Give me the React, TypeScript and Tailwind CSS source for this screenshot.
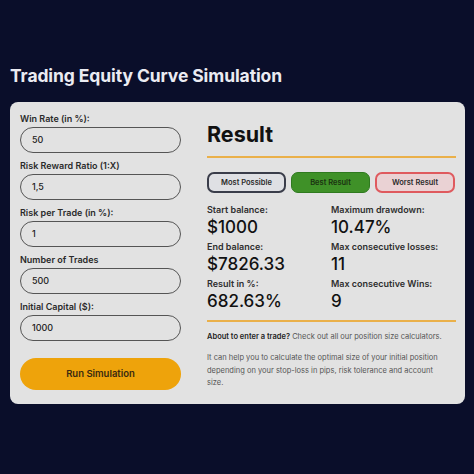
import React from "react";

const fields = [
  { label: "Win Rate (in %):", value: "50" },
  { label: "Risk Reward Ratio (1:X)", value: "1,5" },
  { label: "Risk per Trade (in %):", value: "1" },
  { label: "Number of Trades", value: "500" },
  { label: "Initial Capital ($):", value: "1000" },
];

const stats = [
  [
    { label: "Start balance:", value: "$1000" },
    { label: "End balance:", value: "$7826.33" },
    { label: "Result in %:", value: "682.63%" },
  ],
  [
    { label: "Maximum drawdown:", value: "10.47%" },
    { label: "Max consecutive losses:", value: "11" },
    { label: "Max consecutive Wins:", value: "9" },
  ],
];

export default function App() {
  return (
    <div
      className="w-[474px] h-[474px] bg-[#0a0e2a] overflow-hidden"
      style={{ fontFamily: "Inter, 'Noto Sans', sans-serif" }}
    >
      <h1 className="pt-[64px] pl-[10px] text-[17.5px] leading-[24px] font-bold text-[#ebebf2] tracking-[-0.1px]">
        Trading Equity Curve Simulation
      </h1>
      <div className="mt-[14px] ml-[10px] w-[455px] h-[302px] bg-[#e2e2e2] rounded-[8px] flex pt-[11px] pl-[10px] pr-[9px]">
        <div className="w-[161px] flex flex-col">
          {fields.map((f, i) => (
            <div key={i} className={i === 0 ? "" : "mt-[7px]"}>
              <div className="text-[9px] leading-[12px] font-semibold text-[#2a2a2a]">{f.label}</div>
              <div className="mt-[2px] h-[26px] rounded-full border border-[#555] flex items-center pl-[11px] text-[9px] font-medium text-[#222]">
                {f.value}
              </div>
            </div>
          ))}
          <button className="mt-[17px] h-[32px] rounded-full bg-[#eea30b] text-[9.5px] font-semibold text-[#3a2a10]">
            Run Simulation
          </button>
        </div>
        <div className="ml-[26px] flex-1 flex flex-col">
          <div className="mt-[7px] text-[21.5px] leading-[28px] font-bold text-[#111]">Result</div>
          <div className="mt-[8px] h-[2px] shrink-0 bg-[#eab04a]" />
          <div className="mt-[14px] flex gap-[5px] shrink-0">
            <div className="w-[79px] h-[21px] rounded-[7px] border-2 border-[#3a3d4a] bg-[#dfe0e4] flex items-center justify-center text-[7.5px] font-semibold text-[#2a2a2a]">
              Most Possible
            </div>
            <div className="w-[79px] h-[21px] rounded-[7px] border border-[#2f7a1f] bg-[#3f9128] flex items-center justify-center text-[7.5px] font-semibold text-[#1a3210]">
              Best Result
            </div>
            <div className="w-[80px] h-[21px] rounded-[7px] border-2 border-[#df5a5e] bg-[#ead2d4] flex items-center justify-center text-[7.5px] font-semibold text-[#2a2a2a]">
              Worst Result
            </div>
          </div>
          <div className="mt-[11px] flex shrink-0">
            {stats.map((col, ci) => (
              <div key={ci} className={ci === 0 ? "w-[124px]" : "flex-1"}>
                {col.map((s, si) => (
                  <div key={si} className={si === 0 ? "" : "mt-[2px]"}>
                    <div className="text-[9px] leading-[12px] font-semibold text-[#2e2e2e]">{s.label}</div>
                    <div className="text-[17px] leading-[23px] font-medium text-[#111]">{s.value}</div>
                  </div>
                ))}
              </div>
            ))}
          </div>
          <div className="mt-[7px] h-[2px] shrink-0 bg-[#eab04a]" />
          <p className="mt-[9px] text-[7.5px] leading-[12px] text-[#555] whitespace-nowrap">
            <span className="font-semibold text-[#222]">About to enter a trade?</span> Check out all our position size calculators.
          </p>
          <p className="mt-[9px] text-[7.5px] leading-[12.5px] text-[#555] pr-[6px]">
            It can help you to calculate the optimal size of your initial position depending on your stop-loss in pips, risk tolerance and account size.
          </p>
        </div>
      </div>
    </div>
  );
}
